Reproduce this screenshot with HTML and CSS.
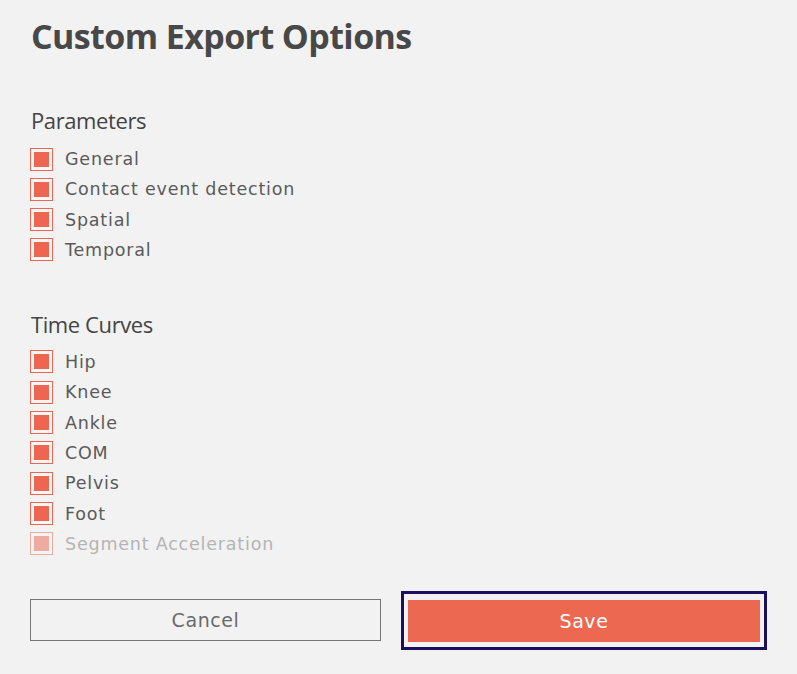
FILE: index.html
```html
<!DOCTYPE html>
<html>
<head>
<meta charset="utf-8">
<link rel="stylesheet" href="styles.css">
</head>
<body>
<div class="page">
  <h1 class="title">Custom Export Options</h1>
  <section class="group group-params">
    <h2 class="group-title">Parameters</h2>
    <ul class="options">
      <li class="option"><span class="box"><span class="fill"></span></span><span class="label">General</span></li>
      <li class="option"><span class="box"><span class="fill"></span></span><span class="label">Contact event detection</span></li>
      <li class="option"><span class="box"><span class="fill"></span></span><span class="label">Spatial</span></li>
      <li class="option"><span class="box"><span class="fill"></span></span><span class="label">Temporal</span></li>
    </ul>
  </section>
  <section class="group group-curves">
    <h2 class="group-title">Time Curves</h2>
    <ul class="options">
      <li class="option"><span class="box"><span class="fill"></span></span><span class="label">Hip</span></li>
      <li class="option"><span class="box"><span class="fill"></span></span><span class="label">Knee</span></li>
      <li class="option"><span class="box"><span class="fill"></span></span><span class="label">Ankle</span></li>
      <li class="option"><span class="box"><span class="fill"></span></span><span class="label">COM</span></li>
      <li class="option"><span class="box"><span class="fill"></span></span><span class="label">Pelvis</span></li>
      <li class="option"><span class="box"><span class="fill"></span></span><span class="label">Foot</span></li>
      <li class="option disabled"><span class="box"><span class="fill"></span></span><span class="label">Segment Acceleration</span></li>
    </ul>
  </section>
  <div class="actions">
    <button class="btn btn-cancel">Cancel</button>
    <div class="focus-ring"><button class="btn btn-save">Save</button></div>
  </div>
</div>
</body>
</html>
```
FILE: styles.css
```css
html, body {
  margin: 0;
  padding: 0;
  background: #f2f2f2;
}
.page {
  padding: 14px 30px 0 30px;
  font-family: "DejaVu Sans", "Noto Sans", sans-serif;
  color: #555;
}
.title {
  margin: 0;
  font-family: "Open Sans", sans-serif;
  font-weight: 700;
  font-size: 34px;
  line-height: 44px;
  color: #484848;
  letter-spacing: -0.6px;
  padding-left: 1px;
}
.group-params {
  margin-top: 49px;
}
.group-params .group-title {
  margin-bottom: 15px;
}
.group-curves {
  margin-top: 50px;
}
.group-title {
  margin: 0 0 13px 1px;
  font-family: "Open Sans", sans-serif;
  font-weight: 400;
  font-size: 22px;
  line-height: 26px;
  color: #444;
  letter-spacing: -0.4px;
}
.group-curves .group-title {
  margin-bottom: 14px;
}
.options {
  list-style: none;
  margin: 0;
  padding: 0;
  display: flex;
  flex-direction: column;
  gap: 8.33px;
}
.option {
  display: flex;
  align-items: center;
  height: 22px;
}
.box {
  box-sizing: border-box;
  width: 23px;
  height: 23px;
  border: 1px solid #ec6651;
  padding: 3px;
  display: flex;
  background: #f6f6f6;
  flex: none;
}
.fill {
  flex: 1;
  background: #ec6651;
}
.label {
  margin-left: 12px;
  font-size: 17.5px;
  color: #5a5a5a;
  letter-spacing: 0.8px;
}
.option.disabled {
  opacity: 0.5;
}
.option.disabled .label {
  color: #777;
}
.actions {
  display: flex;
  align-items: center;
  gap: 20px;
  margin-top: 36px;
}
.btn {
  box-sizing: border-box;
  height: 42px;
  font-family: "DejaVu Sans", sans-serif;
  font-size: 19px;
  letter-spacing: 0.6px;
  cursor: pointer;
}
.btn-cancel {
  width: 351px;
  border: 1px solid #777;
  background: #f2f2f2;
  color: #6a6a6a;
}
.focus-ring {
  width: 366px;
  box-sizing: border-box;
  padding: 6px 4px 5px 4px;
  border: 3px solid #1d0f5c;
}
.btn-save {
  display: block;
  width: 100%;
  border: none;
  background: #ec6851;
  color: #fff;
}
```
